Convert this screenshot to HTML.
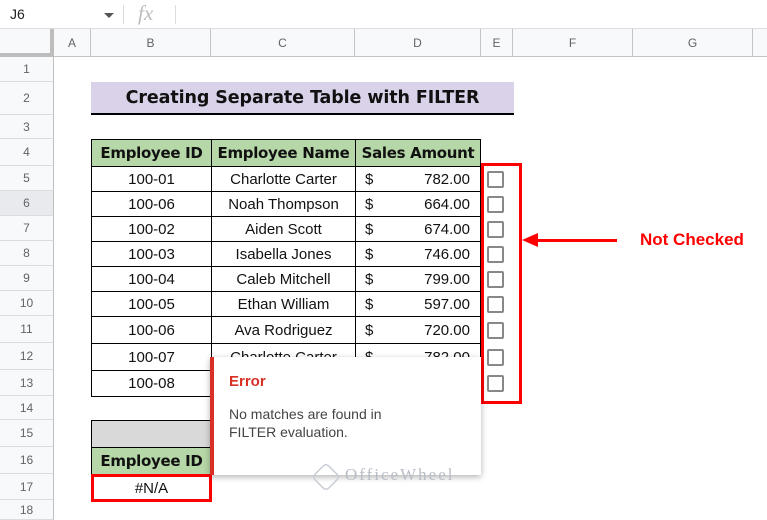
<!DOCTYPE html>
<html><head><meta charset="utf-8"><style>
*{margin:0;padding:0;box-sizing:border-box}
body{width:767px;height:515px;overflow:hidden;background:#fff;font-family:"Liberation Sans",Arial,sans-serif;position:relative}
div{position:absolute}
.rh{left:0;width:54px;background:#f8f9fa;border-bottom:1px solid #dadce0;border-right:1px solid #c0c0c0;color:#5f6368;font-size:12px;text-align:center;display:flex;align-items:center;justify-content:center}
.ch{top:29px;height:28px;background:#f8f9fa;border-right:1px solid #c4c4c4;border-bottom:1px solid #c4c4c4;color:#5f6368;font-size:12px;display:flex;align-items:center;justify-content:center}
.c{border:1px solid #000;display:flex;align-items:center;justify-content:center;font-size:15px;color:#111;background:#fff}
.h{background:#b6d7a8;font-family:"DejaVu Sans",sans-serif;font-weight:bold;font-size:15px;letter-spacing:-0.3px}
.cb{width:17px;height:17px;border:2px solid #888;border-radius:2px;left:487px}
</style></head><body>
<div style="left:0;top:0;width:767px;height:29px;border-bottom:1px solid #dadce0;background:#fff"></div>
<div style="left:10px;top:6px;font-size:14px;color:#222">J6</div>
<div style="left:104px;top:13px;width:0;height:0;border-left:5px solid transparent;border-right:5px solid transparent;border-top:5px solid #555"></div>
<div style="left:123px;top:5px;width:1px;height:19px;background:#dadce0"></div>
<div style="left:138px;top:1px;font-family:'Liberation Serif',serif;font-style:italic;font-size:21px;color:#bbb">fx</div>
<div style="left:175px;top:5px;width:1px;height:19px;background:#dadce0"></div>
<div style="left:0;top:29px;width:54px;height:28px;background:#f8f9fa;border-right:4px solid #bdbdbd;border-bottom:4px solid #bdbdbd"></div>
<div class="ch" style="left:54px;width:37px">A</div>
<div class="ch" style="left:91px;width:120px">B</div>
<div class="ch" style="left:211px;width:144px">C</div>
<div class="ch" style="left:355px;width:126px">D</div>
<div class="ch" style="left:481px;width:32px">E</div>
<div class="ch" style="left:513px;width:120px">F</div>
<div class="ch" style="left:633px;width:120px">G</div>
<div class="ch" style="left:753px;width:20px"></div>
<div class="rh" style="top:57px;height:25px">1</div>
<div class="rh" style="top:82px;height:33px">2</div>
<div class="rh" style="top:115px;height:24px">3</div>
<div class="rh" style="top:139px;height:27px">4</div>
<div class="rh" style="top:166px;height:25px">5</div>
<div class="rh" style="top:191px;height:25px;background:#e8eaed">6</div>
<div class="rh" style="top:216px;height:25px">7</div>
<div class="rh" style="top:241px;height:25px">8</div>
<div class="rh" style="top:266px;height:25px">9</div>
<div class="rh" style="top:291px;height:25px">10</div>
<div class="rh" style="top:316px;height:27px">11</div>
<div class="rh" style="top:343px;height:27px">12</div>
<div class="rh" style="top:370px;height:26px">13</div>
<div class="rh" style="top:396px;height:24px">14</div>
<div class="rh" style="top:420px;height:27px">15</div>
<div class="rh" style="top:447px;height:27px">16</div>
<div class="rh" style="top:474px;height:26px">17</div>
<div class="rh" style="top:500px;height:20px">18</div>

<div style="left:91px;top:82px;width:423px;height:33px;background:#d9d2e9;border-bottom:2px solid #000;font-family:'DejaVu Sans',sans-serif;font-weight:bold;font-size:17.5px;display:flex;align-items:center;justify-content:center;letter-spacing:-0.1px;color:#111">Creating Separate Table with FILTER</div>

<div class="c h" style="left:91px;top:139px;width:121px;height:28px">Employee ID</div>
<div class="c h" style="left:211px;top:139px;width:145px;height:28px">Employee Name</div>
<div class="c h" style="left:355px;top:139px;width:126px;height:28px">Sales Amount</div>

<div id="rows"></div>
<script>
var d=[["100-01","Charlotte Carter","782.00",166,25],["100-06","Noah Thompson","664.00",191,25],["100-02","Aiden Scott","674.00",216,25],["100-03","Isabella Jones","746.00",241,25],["100-04","Caleb Mitchell","799.00",266,25],["100-05","Ethan William","597.00",291,25],["100-06","Ava Rodriguez","720.00",316,27],["100-07","Charlotte Carter","782.00",343,27],["100-08","","",370,26]];
var h="";
d.forEach(function(r){
h+='<div class="c" style="left:91px;top:'+r[3]+'px;width:121px;height:'+(r[4]+1)+'px">'+r[0]+'</div>';
h+='<div class="c" style="left:211px;top:'+r[3]+'px;width:145px;height:'+(r[4]+1)+'px">'+r[1]+'</div>';
h+='<div class="c" style="left:355px;top:'+r[3]+'px;width:126px;height:'+(r[4]+1)+'px;justify-content:space-between;padding:0 10px 0 9px"><span>$</span><span>'+r[2]+'</span></div>';
h+='<div class="cb" style="top:'+(r[3]+r[4]/2-8)+'px"></div>';
});
document.getElementById("rows").outerHTML=h;
</script>
<div style="left:481px;top:163px;width:41px;height:241px;border:3px solid #f00"></div>
<div style="left:535px;top:239px;width:82px;height:3px;background:#f00"></div>
<div style="left:522px;top:233px;width:0;height:0;border-top:7px solid transparent;border-bottom:7px solid transparent;border-right:16px solid #f00"></div>
<div style="left:640px;top:230px;font-weight:bold;font-size:17px;color:#f00">Not Checked</div>

<div class="c" style="left:91px;top:420px;width:390px;height:28px;background:#d9d9d9;font-weight:bold;font-family:'DejaVu Sans',sans-serif">Separate Table</div>
<div class="c h" style="left:91px;top:447px;width:121px;height:28px">Employee ID</div>
<div class="c h" style="left:211px;top:447px;width:270px;height:28px"></div>
<div style="left:91px;top:474px;width:121px;height:28px;border:3px solid #f00;display:flex;align-items:center;justify-content:center;font-size:15px;color:#111">#N/A</div>

<div style="left:210px;top:357px;width:271px;height:118px;background:#fff;box-shadow:0 2px 6px rgba(0,0,0,.3);border-left:4px solid #d93025"></div>
<div style="left:229px;top:373px;font-size:15px;font-weight:bold;color:#d93025">Error</div>
<div style="left:229px;top:405px;font-size:14px;color:#444;line-height:18px">No matches are found in<br>FILTER evaluation.</div>
<div style="left:312px;top:463px;width:28px;height:28px;border:2px solid #c8ccd4;border-radius:6px;transform:rotate(45deg) scale(.75)"></div>
<div style="left:345px;top:465px;font-family:'Liberation Serif',serif;font-size:17px;letter-spacing:2px;color:#b8bcc6">OfficeWheel</div>
</body></html>
